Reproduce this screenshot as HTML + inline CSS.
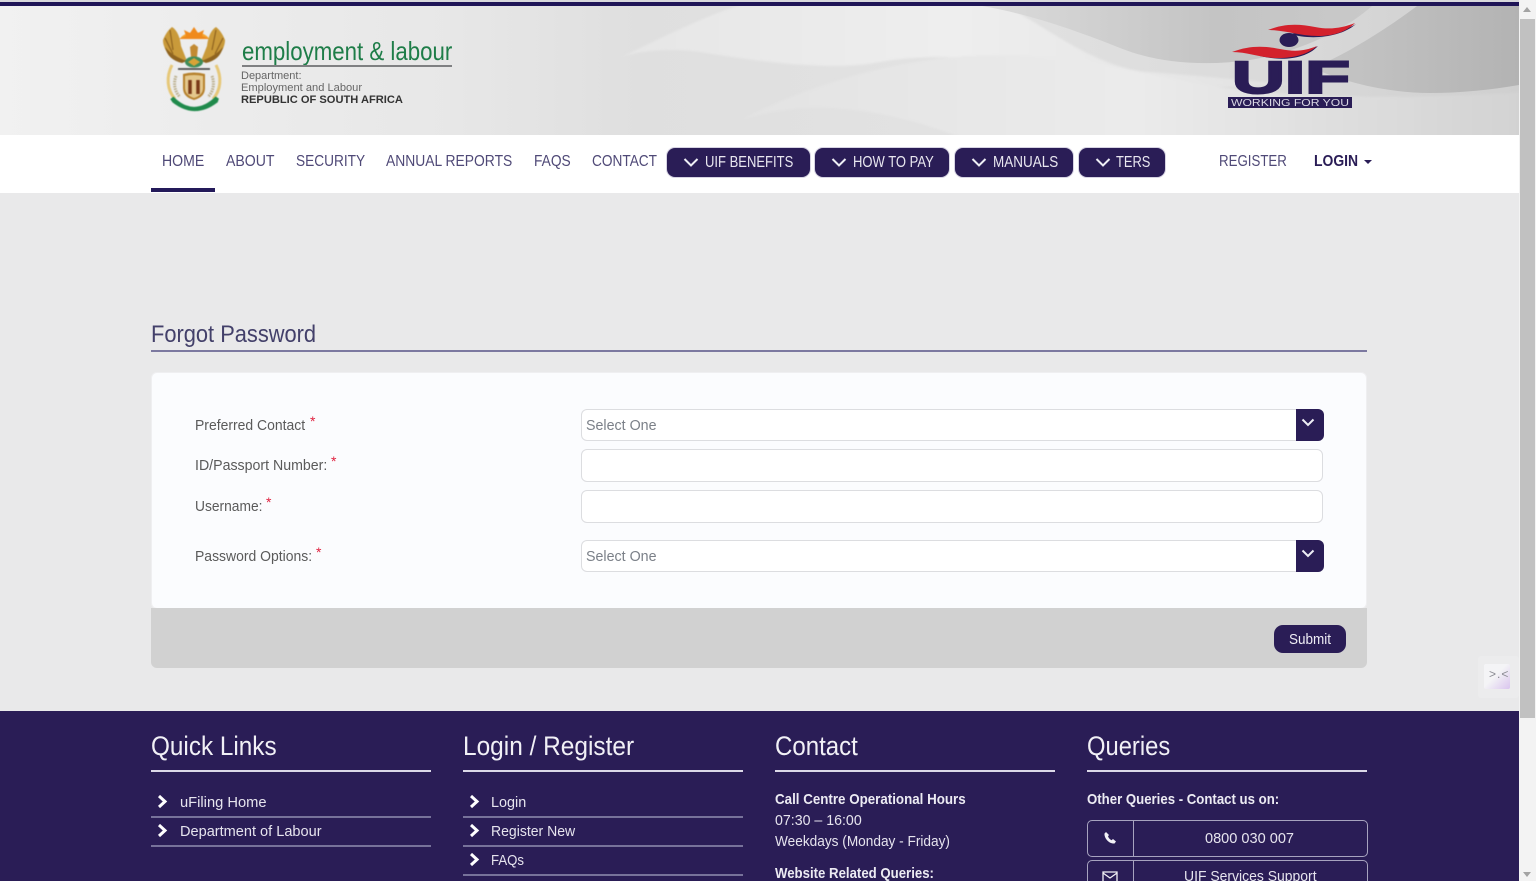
<!DOCTYPE html>
<html lang="en">
<head>
<meta charset="utf-8">
<title>Forgot Password</title>
<style>
html,body{margin:0;padding:0;width:1536px;height:881px;overflow:hidden;background:#e9e9ea}
body{position:relative;font-family:"Liberation Sans",sans-serif}
#w{position:absolute;left:0;top:0;width:1536px;height:881px;overflow:hidden;filter:blur(.35px)}
.a{position:absolute;display:block}
.t{position:absolute;white-space:nowrap;transform-origin:0 50%;transform:scaleX(.88);line-height:20px;height:20px}
.nav{font-size:16px;color:#4f4977;top:152px}
.btn{position:absolute;top:148px;height:29px;background:#2a1d56;border-radius:8px;box-shadow:0 0 0 1px #d6d3e2}
.btn .t{color:#e9e7f0;font-size:15.5px;top:5px}
.btn svg{position:absolute;left:16px;top:9px}
.lab{font-size:15px;color:#5a5a5a;transform:scaleX(.93)}
.star{position:absolute;color:#e0213f;font-size:14px;line-height:14px}
.inp{position:absolute;left:581px;width:740px;background:#fff;border:1px solid #dcdde0;border-radius:6px;box-sizing:content-box}
.sel{position:absolute;left:581px;width:743px;height:32px;background:#fff;border-radius:6px;box-shadow:inset 0 0 0 1px #dcdde0}
.sel .t{left:5px;top:7px;color:#7b8088;font-size:15px;transform:scaleX(.95)}
.sel i{position:absolute;right:0;top:0;width:28px;height:32px;background:#2a1d56;border-radius:0 6px 6px 0}
.sel svg{position:absolute;left:5px;top:9px}
.fh{color:#f1f0f6;font-size:27px;top:736px;height:20px;line-height:20px;transform:scaleX(.9)}
.hr{position:absolute;height:2px;width:280px;top:770px;background:#dcd9e8}
.ln{position:absolute;height:2px;width:280px;background:#77729a}
.fl{color:#e6e4ee;font-size:15px}
.b{font-weight:bold;color:#ecebf3;font-size:15px;transform:scaleX(.88)}
.box{position:absolute;left:1087px;width:279px;border:1px solid #a7a3bf;border-radius:5px;box-sizing:content-box}
.ch{position:absolute;left:157px}
</style>
</head>
<body>
<div id="w">

<!-- header -->
<div class="a" style="left:0;top:0;width:1519px;height:2px;background:#d8d8dc"></div>
<svg class="a" style="left:0;top:2px" width="1519" height="133" viewBox="0 2 1519 133">
  <defs>
    <linearGradient id="hg" x1="0" x2="1" y1="0" y2="0">
      <stop offset="0" stop-color="#f1f1f1"/><stop offset=".3" stop-color="#e7e7e7"/><stop offset=".42" stop-color="#dfdfdf"/><stop offset=".62" stop-color="#e2e2e2"/><stop offset=".8" stop-color="#dcdcdc"/><stop offset="1" stop-color="#cfcfcf"/>
    </linearGradient>
    <linearGradient id="w1" x1="0" x2="1" y1="0" y2="0"><stop offset="0" stop-color="#e6e6e6"/><stop offset=".5" stop-color="#eeeeee"/><stop offset="1" stop-color="#e2e2e2"/></linearGradient>
    <linearGradient id="w2" x1="0" x2="1" y1="0" y2="0"><stop offset="0" stop-color="#e3e3e3"/><stop offset=".5" stop-color="#ebebeb"/><stop offset="1" stop-color="#d2d2d2"/></linearGradient>
    <linearGradient id="dk" x1="0" x2="1" y1="0" y2="0"><stop offset="0" stop-color="#dbdbdb"/><stop offset=".6" stop-color="#c4c4c4"/><stop offset="1" stop-color="#c9c9c9"/></linearGradient>
    <linearGradient id="dk2" x1="0" x2="1" y1="0" y2="0"><stop offset="0" stop-color="#c6c6c6"/><stop offset="1" stop-color="#b3b3b3"/></linearGradient>
    <filter id="sf" x="-5%" y="-5%" width="110%" height="110%"><feGaussianBlur stdDeviation="1"/></filter>
    <clipPath id="hc"><rect x="0" y="6" width="1519" height="129"/></clipPath>
  </defs>
  <rect x="0" y="6" width="1519" height="129" fill="url(#hg)"/>
  <g clip-path="url(#hc)">
    <g filter="url(#sf)">
      <path d="M619 58C680 30 740 -5 800 -5H985C1040 20 1090 68 1150 72C1200 76 1240 80 1290 84C1220 90 1160 86 1110 78C1020 62 950 50 880 62C840 70 780 65 700 52C670 48 640 50 619 58Z" fill="url(#w1)"/>
      <path d="M741 120C810 85 900 55 1000 55C1080 55 1130 72 1200 84C1280 98 1400 100 1530 92V145H980C920 120 860 105 800 108C780 110 760 114 741 120Z" fill="url(#w2)"/>
    </g>
    <path d="M982 6H1372C1345 30 1300 52 1250 60C1200 67 1155 62 1120 48C1080 32 1030 14 982 6Z" fill="url(#dk)"/>
    <path d="M1417 6H1519V85C1490 90 1460 93 1430 93C1395 93 1350 85 1313 68C1345 55 1385 30 1417 6Z" fill="url(#dk2)"/>
  </g>
  <rect x="0" y="2" width="1519" height="4" fill="#1f1557"/>
</svg>

<!-- coat of arms -->
<svg class="a" style="left:160px;top:24px;filter:blur(.4px)" width="70" height="90" viewBox="160 24 70 90">
  <path d="M180 39a15 9 0 0 1 29 0z" fill="#f4a32c"/>
  <path d="M178 39l8-3-2-6 6 3 4-6 4 6 6-3-2 6 8 3z" fill="#f08a1c"/>
  <path d="M172 27c5 3 8 10 9 19l6 15-7 1c-7-3-14-9-16-16-1-3-1-5-1-6 2-5 5-10 9-13z" fill="#c99a3a"/>
  <path d="M216 27c-5 3-8 10-9 19l-6 15 7 1c7-3 14-9 16-16 1-3 1-5 1-6-2-5-5-10-9-13z" fill="#c99a3a"/>
  <path d="M170 30l3 20M165 38l8 16M212 50l4-20M215 54l8-16" stroke="#8f6420" stroke-width="1.200" fill="none"/>
  <path d="M165 47c6 7 13 11 22 14l-5 2c-9-2-15-7-17-16zM223 47c-6 7-13 11-22 14l5 2c9-2 15-7 17-16z" fill="#8f6420"/>
  <path d="M190 47l4-3 4 3-1 10h-6z" fill="#c28a32"/>
  <ellipse cx="194" cy="62" rx="9" ry="5.500" fill="#3e8d5a"/>
  <path d="M188 62l6-4 6 4-6 4z" fill="#d8a337"/>
  <path d="M178 69h32" stroke="#333" stroke-width="1.500"/>
  <path d="M172 65c-6 12-5 25 3 34M216 65c6 12 5 25-3 34" fill="none" stroke="#e6c777" stroke-width="3"/>
  <path d="M176 76c-3 8-1 16 4 21M212 76c3 8 1 16-4 21" fill="none" stroke="#b9ad8a" stroke-width="3" stroke-dasharray="1.500 1"/>
  <path d="M183 74q11 -3 22 0v14q0 9-11 12q-11-3-11-12z" fill="#b6812d"/>
  <path d="M185 76q9 -2 18 0v12q0 7-9 10q-9-3-9-10z" fill="#e4c88d"/>
  <path d="M190 80v14M198 80v14" stroke="#7a3a18" stroke-width="3.500"/>
  <path d="M172 98q22 22 45 0l-1 3q-21 16-42 0z" fill="#1f8a4b" stroke="#1f8a4b" stroke-width="4"/>
</svg>

<!-- employment & labour -->
<div class="t" style="left:242px;top:41px;font-size:26px;color:#1e7d48;transform:scaleX(.856)">employment &amp; labour</div>
<div class="a" style="left:242px;top:65px;width:210px;height:2px;background:#7f8082"></div>
<div class="t" style="left:241px;top:66px;font-size:11px;color:#666;transform:scaleX(1)">Department:</div>
<div class="t" style="left:241px;top:78px;font-size:11px;color:#666;transform:scaleX(1.010)">Employment and Labour</div>
<div class="t" style="left:241px;top:90px;font-size:11px;font-weight:bold;color:#333;transform:scaleX(1.010)">REPUBLIC OF SOUTH AFRICA</div>

<!-- UIF logo -->
<svg class="a" style="left:1225px;top:18px;filter:blur(.3px)" width="135" height="94" viewBox="1225 18 135 94">
  <path d="M1290 34C1310 40 1340 38 1356 24C1345 31 1325 34 1300 32z" fill="#2a1d56"/>
  <path d="M1268 30C1285 23 1300 24 1315 27C1330 30 1342 28 1355 23C1347 31 1335 36 1318 36C1300 36 1285 30 1268 30Z" fill="#d3212c"/>
  <ellipse cx="1289" cy="40" rx="9.500" ry="7" fill="#2a1d56"/>
  <path d="M1260 56C1280 61 1305 60 1318 46C1305 53 1285 56 1265 53z" fill="#2a1d56"/>
  <path d="M1232 52C1250 45 1265 46 1280 49C1295 52 1305 51 1317 46C1308 54 1295 58 1278 58C1260 58 1248 52 1232 52Z" fill="#d3212c"/>
  <text x="1232" y="93" font-family="Liberation Sans" font-weight="bold" font-size="45" fill="#2a1d56" stroke="#2a1d56" stroke-width="2" textLength="118" lengthAdjust="spacingAndGlyphs">UIF</text>
  <rect x="1228" y="97" width="124" height="11" fill="#2a1d56"/>
  <text x="1231" y="106" font-family="Liberation Sans" font-size="10" fill="#d9d7e4" textLength="118" lengthAdjust="spacingAndGlyphs">WORKING FOR YOU</text>
</svg>

<!-- nav -->
<div class="a" style="left:0;top:135px;width:1519px;height:58px;background:#fff"></div>
<div class="t nav" style="left:162px">HOME</div>
<div class="a" style="left:151px;top:188px;width:64px;height:4px;background:#241a5a"></div>
<div class="t nav" style="left:226px">ABOUT</div>
<div class="t nav" style="left:296px;transform:scaleX(.855)">SECURITY</div>
<div class="t nav" style="left:386px;transform:scaleX(.866)">ANNUAL REPORTS</div>
<div class="t nav" style="left:534px;transform:scaleX(.86)">FAQS</div>
<div class="t nav" style="left:591.500px;transform:scaleX(.854)">CONTACT</div>

<div class="btn" style="left:667px;width:143px"><svg width="16" height="11" viewBox="0 0 16 11"><path d="M1.500 2l6.500 6.500L14.500 2" fill="none" stroke="#eeeef5" stroke-width="2"/></svg><span class="t" style="left:38px;transform:scaleX(.84)">UIF BENEFITS</span></div>
<div class="btn" style="left:815px;width:134px"><svg width="16" height="11" viewBox="0 0 16 11"><path d="M1.500 2l6.500 6.500L14.500 2" fill="none" stroke="#eeeef5" stroke-width="2"/></svg><span class="t" style="left:38px;transform:scaleX(.84)">HOW TO PAY</span></div>
<div class="btn" style="left:955px;width:118px"><svg width="16" height="11" viewBox="0 0 16 11"><path d="M1.500 2l6.500 6.500L14.500 2" fill="none" stroke="#eeeef5" stroke-width="2"/></svg><span class="t" style="left:38px;transform:scaleX(.87)">MANUALS</span></div>
<div class="btn" style="left:1079px;width:86px"><svg width="16" height="11" viewBox="0 0 16 11"><path d="M1.500 2l6.500 6.500L14.500 2" fill="none" stroke="#eeeef5" stroke-width="2"/></svg><span class="t" style="left:37px;transform:scaleX(.83)">TERS</span></div>

<div class="t nav" style="left:1219px;transform:scaleX(.83)">REGISTER</div>
<div class="t nav" style="left:1314px;color:#2a1d56;font-weight:bold;transform:scaleX(.87)">LOGIN</div>
<div class="a" style="left:1364px;top:160px;width:0;height:0;border-left:4px solid transparent;border-right:4px solid transparent;border-top:4px solid #2a1d56"></div>

<!-- title -->
<div class="t" style="left:151px;top:325px;font-size:24px;color:#43406a;transform:scaleX(.91)">Forgot Password</div>
<div class="a" style="left:151px;top:350px;width:1216px;height:1.500px;background:#7c79a0"></div>

<!-- form card -->
<div class="a" style="left:151px;top:372px;width:1216px;height:237px;box-sizing:border-box;background:#fbfcfe;border:1px solid #efeff1;border-radius:6px"></div>
<div class="a" style="left:151px;top:608px;width:1216px;height:60px;background:#d1d1d1;border-radius:0 0 6px 6px"></div>

<div class="t lab" style="left:195px;top:416px">Preferred Contact</div><span class="star" style="left:310px;top:414px">*</span>
<div class="t lab" style="left:195px;top:456px;transform:scaleX(.945)">ID/Passport Number:</div><span class="star" style="left:331px;top:454px">*</span>
<div class="t lab" style="left:195px;top:497px;transform:scaleX(.92)">Username:</div><span class="star" style="left:266px;top:495px">*</span>
<div class="t lab" style="left:195px;top:547px">Password Options:</div><span class="star" style="left:316px;top:545px">*</span>

<div class="sel" style="top:409px"><span class="t">Select One</span><i><svg width="14" height="10" viewBox="0 0 14 10"><path d="M1.500 1.500L7 7l5.500-5.500" fill="none" stroke="#eeeef5" stroke-width="2"/></svg></i></div>
<div class="inp" style="top:449px;height:31px"></div>
<div class="inp" style="top:490px;height:31px"></div>
<div class="sel" style="top:540px"><span class="t">Select One</span><i><svg width="14" height="10" viewBox="0 0 14 10"><path d="M1.500 1.500L7 7l5.500-5.500" fill="none" stroke="#eeeef5" stroke-width="2"/></svg></i></div>

<div class="a" style="left:1274px;top:625px;width:72px;height:28px;background:#2a1d56;border-radius:9px"></div>
<div class="t" style="left:1289px;top:630px;font-size:15px;color:#efedf5;transform:scaleX(.9)">Submit</div>

<!-- floating widget -->
<div class="a" style="left:1478px;top:656px;width:41px;height:42px;background:#ececed;border-radius:3px"></div>
<div class="a" style="left:1484px;top:664px;width:26px;height:25px;border-radius:2px;background:linear-gradient(135deg,#f4f4f6 45%,#d9c4ee 100%)"></div>
<div class="t" style="left:1489px;top:664px;font-size:12px;letter-spacing:1px;color:#8a8a92;transform:scaleX(1)">&gt;.&lt;</div>

<!-- footer -->
<div class="a" style="left:0;top:711px;width:1519px;height:170px;background:#2a1d56"></div>

<div class="t fh" style="left:151px">Quick Links</div><div class="hr" style="left:151px"></div>
<div class="t fh" style="left:463px;transform:scaleX(.905)">Login / Register</div><div class="hr" style="left:463px"></div>
<div class="t fh" style="left:775px;transform:scaleX(.89)">Contact</div><div class="hr" style="left:775px"></div>
<div class="t fh" style="left:1087px;transform:scaleX(.88)">Queries</div><div class="hr" style="left:1087px"></div>

<svg class="ch" style="top:794px" width="11" height="15" viewBox="0 0 11 15"><path d="M2 2l6 5.500-6 5.500" fill="none" stroke="#fff" stroke-width="3"/></svg>
<div class="t fl" style="left:180px;top:793px;transform:scaleX(.98)">uFiling Home</div><div class="ln" style="left:151px;top:816px"></div>
<svg class="ch" style="top:823px" width="11" height="15" viewBox="0 0 11 15"><path d="M2 2l6 5.500-6 5.500" fill="none" stroke="#fff" stroke-width="3"/></svg>
<div class="t fl" style="left:180px;top:822px;transform:scaleX(.97)">Department of Labour</div><div class="ln" style="left:151px;top:845px"></div>

<svg class="ch" style="left:469px;top:794px" width="11" height="15" viewBox="0 0 11 15"><path d="M2 2l6 5.500-6 5.500" fill="none" stroke="#fff" stroke-width="3"/></svg>
<div class="t fl" style="left:491px;top:793px;transform:scaleX(.96)">Login</div><div class="ln" style="left:463px;top:816px"></div>
<svg class="ch" style="left:469px;top:823px" width="11" height="15" viewBox="0 0 11 15"><path d="M2 2l6 5.500-6 5.500" fill="none" stroke="#fff" stroke-width="3"/></svg>
<div class="t fl" style="left:491px;top:822px;transform:scaleX(.935)">Register New</div><div class="ln" style="left:463px;top:845px"></div>
<svg class="ch" style="left:469px;top:852px" width="11" height="15" viewBox="0 0 11 15"><path d="M2 2l6 5.500-6 5.500" fill="none" stroke="#fff" stroke-width="3"/></svg>
<div class="t fl" style="left:491px;top:851px">FAQs</div><div class="ln" style="left:463px;top:874px"></div>

<div class="t b" style="left:775px;top:790px;transform:scaleX(.89)">Call Centre Operational Hours</div>
<div class="t fl" style="left:775px;top:811px;transform:scaleX(.945)">07:30 – 16:00</div>
<div class="t fl" style="left:775px;top:832px;transform:scaleX(.91)">Weekdays (Monday - Friday)</div>
<div class="t b" style="left:775px;top:864px">Website Related Queries:</div>

<div class="t b" style="left:1087px;top:790px">Other Queries - Contact us on:</div>
<div class="box" style="top:820px;height:35px"></div>
<div class="a" style="left:1133px;top:821px;width:1px;height:35px;background:#a7a3bf"></div>
<svg class="a" style="left:1103px;top:831px" width="14" height="14" viewBox="0 0 14 14"><path d="M3 1L1.500 2.500C1 7 6 13 11.500 12.500L13 10.500 10 8 8.500 9.200C7 8.500 5.500 7 5 5.300L6 4z" fill="#f2f1f6"/></svg>
<div class="t fl" style="left:1205px;top:829px;transform:scaleX(.97)">0800 030 007</div>
<div class="box" style="top:860px;height:35px"></div>
<div class="a" style="left:1133px;top:861px;width:1px;height:20px;background:#a7a3bf"></div>
<svg class="a" style="left:1102px;top:871px" width="16" height="12" viewBox="0 0 16 12"><path d="M1 1h14v10H1zM1 2l7 5 7-5" fill="none" stroke="#f2f1f6" stroke-width="1.300"/></svg>
<div class="t fl" style="left:1184px;top:867px;transform:scaleX(.93)">UIF Services Support</div>

<!-- scrollbar -->
<div class="a" style="left:1519px;top:0;width:17px;height:881px;background:#f3f3f3"></div>
<div class="a" style="left:1523px;top:7px;width:0;height:0;border-left:4px solid transparent;border-right:4px solid transparent;border-bottom:5px solid #a3a3a3"></div>
<div class="a" style="left:1520px;top:19px;width:15px;height:699px;background:#c1c1c1"></div>
<div class="a" style="left:1523px;top:872px;width:0;height:0;border-left:4px solid transparent;border-right:4px solid transparent;border-top:5px solid #a3a3a3"></div>

</div>
</body>
</html>
